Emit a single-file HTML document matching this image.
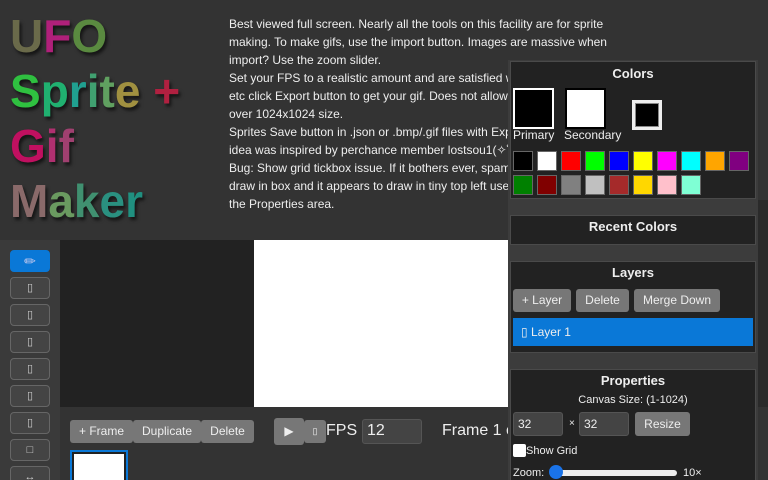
<!DOCTYPE html>
<html><head><meta charset="utf-8"><style>
*{box-sizing:border-box;margin:0;padding:0}
html,body{width:768px;height:480px;overflow:hidden}
body{background:#333;font-family:"Liberation Sans",sans-serif;color:#eee;position:relative}
.title{position:absolute;left:10px;top:9px;font-size:46px;font-weight:bold;line-height:55px;text-shadow:2px 3px 3px rgba(0,0,0,.6)}
.title div{white-space:nowrap}
.info{position:absolute;left:229px;top:15px;font-size:12px;line-height:18px;color:#eee;white-space:nowrap}
.tb{position:absolute;left:0;top:240px;width:60px;height:240px;background:#3a3a3a}
.tbtn{position:absolute;left:10px;width:40px;height:22px;border:1px solid #666;border-radius:4px;background:#444;color:#ccc;font-size:11px;text-align:center;line-height:20px}
.dark{position:absolute;left:60px;top:240px;width:449px;height:167px;background:#222}
.canvas{position:absolute;left:254px;top:240px;width:255px;height:167px;background:#fff}
.bottom{position:absolute;left:60px;top:407px;width:449px;height:73px;background:#333}
.btn{position:absolute;background:#777;color:#eee;font-size:12px;border-radius:3px;text-align:center;line-height:23px;height:23px}
.inp{position:absolute;background:#444;border:1px solid #555;border-radius:3px;color:#eee}
.rp{position:absolute;left:508px;top:60px;width:250px;height:420px;background:#3c3c3c;overflow:hidden}
.panel{position:absolute;left:2px;width:246px;background:#222;border:1px solid #4a4a4a}
.ph{text-align:center;font-weight:bold;font-size:13px;color:#eee}
.sw{position:absolute;width:20px;height:20px;border:1px solid #666}
.strip{position:absolute;left:758px;top:200px;width:10px;height:207px;background:#2a2a2a}
</style></head><body>
<div class="title">
<div><span style="color:#6a6a4a">U</span><span style="color:#b0207a">F</span><span style="color:#5a8a40">O</span></div>
<div><span style="color:#2fc040">S</span><span style="color:#20b070">p</span><span style="color:#20a090">r</span><span style="color:#40a070">i</span><span style="color:#60a060">t</span><span style="color:#a09040">e</span> <span style="color:#b02040">+</span></div>
<div><span style="color:#c01060">G</span><span style="color:#b03070">i</span><span style="color:#a04070">f</span></div>
<div><span style="color:#8a6a6a">M</span><span style="color:#6a9a60">a</span><span style="color:#409070">k</span><span style="color:#2a9080">e</span><span style="color:#209080">r</span></div>
</div>
<div class="info">Best viewed full screen. Nearly all the tools on this facility are for sprite<br>making. To make gifs, use the import button. Images are massive when<br>import? Use the zoom slider.<br>Set your FPS to a realistic amount and are satisfied with your frames<br>etc click Export button to get your gif. Does not allow exports<br>over 1024x1024 size.<br>Sprites Save button in .json or .bmp/.gif files with Export. The<br>idea was inspired by perchance member lostsou1(✧˚) thanks.<br>Bug: Show grid tickbox issue. If it bothers ever, spam the grid,<br>draw in box and it appears to draw in tiny top left use<br>the Properties area.</div>
<div class="strip"></div>
<div class="tb">
<div class="tbtn" style="top:10px;background:#0a78d7;border-color:#0a78d7;color:#cce;font-size:14px">✏</div>
<div class="tbtn" style="top:37px">▯</div>
<div class="tbtn" style="top:64px">▯</div>
<div class="tbtn" style="top:91px">▯</div>
<div class="tbtn" style="top:118px">▯</div>
<div class="tbtn" style="top:145px">▯</div>
<div class="tbtn" style="top:172px">▯</div>
<div class="tbtn" style="top:199px">□</div>
<div class="tbtn" style="top:226px">↔</div>
</div>
<div class="dark"></div>
<div class="canvas"></div>
<div class="bottom">
<div class="btn" style="left:10px;top:13px;width:63px">+ Frame</div>
<div class="btn" style="left:73px;top:13px;width:68px">Duplicate</div>
<div class="btn" style="left:141px;top:13px;width:53px">Delete</div>
<div class="btn" style="left:214px;top:11px;width:30px;height:27px;line-height:27px">▶</div>
<div class="btn" style="left:244px;top:13px;width:22px;font-size:9px">▯</div>
<div style="position:absolute;left:266px;top:15px;font-size:16px">FPS</div>
<div class="inp" style="left:302px;top:12px;width:60px;height:25px;font-size:16px;padding:2px 4px">12</div>
<div style="position:absolute;left:382px;top:15px;font-size:16px;white-space:nowrap">Frame 1 of 1</div>
<div style="position:absolute;left:10px;top:43px;width:58px;height:40px;border:2px solid #0a78d7;background:#fff;box-shadow:inset 0 0 0 2px #222"></div>
</div>
<div class="rp">
<div class="panel" style="top:1px;height:138px">
<div class="ph" style="margin-top:4px">Colors</div>
<div style="position:absolute;left:2px;top:26px;width:41px;height:41px;background:#000;border:2px solid #fff"></div>
<div style="position:absolute;left:54px;top:26px;width:41px;height:41px;background:#fff;border:2px solid #000"></div>
<div style="position:absolute;left:121px;top:38px;width:30px;height:30px;background:#000;border:3px solid #eee;outline:1px solid #888;outline-offset:-4px"></div>
<div style="position:absolute;left:2px;top:66px;font-size:12px">Primary</div>
<div style="position:absolute;left:53px;top:66px;font-size:12px">Secondary</div>
<div class="sw" style="left:2px;top:89px;background:#000"></div>
<div class="sw" style="left:26px;top:89px;background:#fff"></div>
<div class="sw" style="left:50px;top:89px;background:#f00"></div>
<div class="sw" style="left:74px;top:89px;background:#0f0"></div>
<div class="sw" style="left:98px;top:89px;background:#00f"></div>
<div class="sw" style="left:122px;top:89px;background:#ff0"></div>
<div class="sw" style="left:146px;top:89px;background:#f0f"></div>
<div class="sw" style="left:170px;top:89px;background:#0ff"></div>
<div class="sw" style="left:194px;top:89px;background:#ffa500"></div>
<div class="sw" style="left:218px;top:89px;background:#800080"></div>
<div class="sw" style="left:2px;top:113px;background:#008000"></div>
<div class="sw" style="left:26px;top:113px;background:#800000"></div>
<div class="sw" style="left:50px;top:113px;background:#808080"></div>
<div class="sw" style="left:74px;top:113px;background:#c0c0c0"></div>
<div class="sw" style="left:98px;top:113px;background:#a52a2a"></div>
<div class="sw" style="left:122px;top:113px;background:#ffd700"></div>
<div class="sw" style="left:146px;top:113px;background:#ffc0cb"></div>
<div class="sw" style="left:170px;top:113px;background:#7fffd4"></div>
</div>
<div class="panel" style="top:155px;height:30px"><div class="ph" style="margin-top:3px">Recent Colors</div></div>
<div class="panel" style="top:201px;height:92px">
<div class="ph" style="margin-top:3px">Layers</div>
<div class="btn" style="left:2px;top:27px;width:58px">+ Layer</div>
<div class="btn" style="left:65px;top:27px;width:53px">Delete</div>
<div class="btn" style="left:123px;top:27px;width:86px">Merge Down</div>
<div style="position:absolute;left:2px;top:56px;width:240px;height:30px;background:#0a78d7;border-bottom:2px solid #222;font-size:12px;line-height:28px;padding-left:8px">▯ Layer 1</div>
</div>
<div class="panel" style="top:309px;height:120px">
<div class="ph" style="margin-top:3px">Properties</div>
<div style="text-align:center;font-size:11px;margin-top:6px">Canvas Size: (1-1024)</div>
<div class="inp" style="left:2px;top:42px;width:50px;height:24px;font-size:12px;padding:4px">32</div>
<div style="position:absolute;left:58px;top:48px;font-size:10px">×</div>
<div class="inp" style="left:68px;top:42px;width:50px;height:24px;font-size:12px;padding:4px">32</div>
<div class="btn" style="left:124px;top:42px;width:55px;height:24px;line-height:24px">Resize</div>
<div style="position:absolute;left:2px;top:74px;width:13px;height:13px;background:#fff;border-radius:2px"></div>
<div style="position:absolute;left:15px;top:75px;font-size:11px">Show Grid</div>
<div style="position:absolute;left:2px;top:97px;font-size:11px">Zoom:</div>
<div style="position:absolute;left:42px;top:100px;width:124px;height:6px;background:#eee;border-radius:3px"></div>
<div style="position:absolute;left:38px;top:95px;width:14px;height:14px;background:#1a73e8;border-radius:50%"></div>
<div style="position:absolute;left:172px;top:97px;font-size:11px">10×</div>
</div>
</div>
</body></html>
